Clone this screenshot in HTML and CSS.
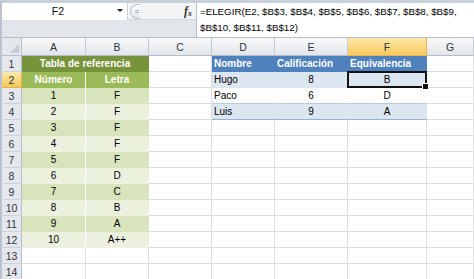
FILE: index.html
```html
<!DOCTYPE html>
<html>
<head lang="es">
    <meta charset="UTF-8">
    <title>ELEGIR</title>
    <link rel="stylesheet" href="styles.css">
</head>
<body>
<div class="excel">
    <div class="fbar">
        <div class="fbar-left">
            <div class="fbar-top">
                <div class="namebox"><span class="ref">F2</span><span class="drop"></span></div>
                <div class="splitter"><i></i><i></i></div>
                <div class="fx">f<sub>x</sub></div>
            </div>
        </div>
        <div class="formula">=ELEGIR(E2, $B$3, $B$4, $B$5, $B$6, $B$7, $B$8, $B$9,<br>$B$10, $B$11, $B$12)</div>
    </div>
    <div class="sheet">
        <!-- cabecera de columnas -->
        <div class="corner"></div>
        <div class="ch">A</div><div class="ch">B</div><div class="ch">C</div><div class="ch">D</div>
        <div class="ch">E</div><div class="ch on">F</div><div class="ch">G</div>

        <div class="rh">1</div>
        <div class="c title">Tabla de referencia</div>
        <div class="c"></div>
        <div class="c bh">Nombre</div><div class="c bh">Calificación</div><div class="c bh">Equivalencia</div>
        <div class="c"></div>

        <div class="rh on">2</div>
        <div class="c gh ga">Número</div><div class="c gh">Letra</div>
        <div class="c"></div>
        <div class="c b1 left">Hugo</div><div class="c b1">8</div><div class="c b1 sel">B</div>
        <div class="c"></div>

        <div class="rh">3</div>
        <div class="c g1 ga">1</div><div class="c g1">F</div>
        <div class="c"></div>
        <div class="c b2 left">Paco</div><div class="c b2">6</div><div class="c b2">D</div>
        <div class="c"></div>

        <div class="rh">4</div>
        <div class="c g2 ga">2</div><div class="c g2">F</div>
        <div class="c"></div>
        <div class="c b1 bl left">Luis</div><div class="c b1 bl">9</div><div class="c b1 bl">A</div>
        <div class="c"></div>

        <div class="rh">5</div>
        <div class="c g1 ga">3</div><div class="c g1">F</div>
        <div class="c"></div><div class="c"></div><div class="c"></div><div class="c"></div><div class="c"></div>

        <div class="rh">6</div>
        <div class="c g2 ga">4</div><div class="c g2">F</div>
        <div class="c"></div><div class="c"></div><div class="c"></div><div class="c"></div><div class="c"></div>

        <div class="rh">7</div>
        <div class="c g1 ga">5</div><div class="c g1">F</div>
        <div class="c"></div><div class="c"></div><div class="c"></div><div class="c"></div><div class="c"></div>

        <div class="rh">8</div>
        <div class="c g2 ga">6</div><div class="c g2">D</div>
        <div class="c"></div><div class="c"></div><div class="c"></div><div class="c"></div><div class="c"></div>

        <div class="rh">9</div>
        <div class="c g1 ga">7</div><div class="c g1">C</div>
        <div class="c"></div><div class="c"></div><div class="c"></div><div class="c"></div><div class="c"></div>

        <div class="rh">10</div>
        <div class="c g2 ga">8</div><div class="c g2">B</div>
        <div class="c"></div><div class="c"></div><div class="c"></div><div class="c"></div><div class="c"></div>

        <div class="rh">11</div>
        <div class="c g1 ga">9</div><div class="c g1">A</div>
        <div class="c"></div><div class="c"></div><div class="c"></div><div class="c"></div><div class="c"></div>

        <div class="rh">12</div>
        <div class="c g2 ga">10</div><div class="c g2">A++</div>
        <div class="c"></div><div class="c"></div><div class="c"></div><div class="c"></div><div class="c"></div>

        <div class="rh">13</div>
        <div class="c"></div><div class="c"></div><div class="c"></div><div class="c"></div>
        <div class="c"></div><div class="c"></div><div class="c"></div>

        <div class="rh">14</div>
        <div class="c"></div><div class="c"></div><div class="c"></div><div class="c"></div>
        <div class="c"></div><div class="c"></div><div class="c"></div>
    </div>
</div>
</body>
</html>
```

FILE: styles.css
```css
* {
    margin: 0;
    padding: 0;
    box-sizing: border-box;
}

body {
    font-family: "Liberation Sans", Arial, sans-serif;
    font-size: 10px;
    color: #111;
    background: #fff;
}

.excel {
    width: 474px;
    height: 279px;
    overflow: hidden;
    border-left: 2px solid #b9c3cf;
    border-top: 3px solid #c7cfd9;
}

/* barra de fórmulas */
.fbar {
    display: flex;
    height: 35px;
    border-bottom: 1px solid #b4bdc9;
}

.fbar-left {
    width: 194px;
    background: #e2e6eb;
}

.fbar-top {
    display: flex;
    align-items: center;
    height: 17px;
    background: #f2f4f6;
    border-bottom: 1px solid #d3d9e0;
}

.namebox {
    display: flex;
    align-items: center;
    width: 126px;
    height: 17px;
    background: #fff;
    border-right: 1px solid #c9d0d8;
}

.namebox .ref {
    flex: 1;
    text-align: center;
    font-size: 10.5px;
}

.namebox .drop {
    width: 13px;
    height: 4px;
    position: relative;
}

.namebox .drop::after {
    content: "";
    position: absolute;
    left: 3px;
    top: 0;
    border-left: 3px solid transparent;
    border-right: 3px solid transparent;
    border-top: 3px solid #222;
}

.splitter {
    display: flex;
    flex-direction: column;
    justify-content: center;
    gap: 1px;
    width: 10px;
    height: 15px;
    margin-left: 2px;
    padding-left: 4px;
    border: 1px solid #b8c0ca;
    border-right: none;
    border-radius: 8px 0 0 8px;
    background: linear-gradient(#fbfcfd, #e6e9ee);
}

.splitter i {
    display: block;
    width: 4px;
    height: 1px;
    background: #aab3be;
}

.fx {
    margin-left: auto;
    margin-right: 4px;
    font-family: "Liberation Serif", serif;
    font-style: italic;
    font-weight: bold;
    font-size: 12px;
    color: #333;
}

.fx sub {
    font-size: 8px;
    vertical-align: -1px;
}

.formula {
    flex: 1;
    background: #fff;
    border-left: 1px solid #b4bdc9;
    padding: 1px 0 0 3px;
    font-size: 9.75px;
    line-height: 16px;
    color: #000;
    white-space: nowrap;
}

/* hoja */
.sheet {
    display: grid;
    grid-template-columns: 20px 64px 63px 63px 63px 73px 79px 1fr;
    grid-template-rows: 18px;
    grid-auto-rows: 16px;
}

.corner {
    position: relative;
    background: #e4e8ed;
    border-right: 1px solid #b4bdc9;
    border-bottom: 1px solid #b4bdc9;
}

.corner::after {
    content: "";
    position: absolute;
    right: 2px;
    bottom: 2px;
    border-left: 9px solid transparent;
    border-bottom: 9px solid #c6ccd4;
}

.ch {
    display: flex;
    align-items: center;
    justify-content: center;
    background: linear-gradient(#f8f9fa, #e3e6ea);
    border-right: 1px solid #c3cad3;
    border-bottom: 1px solid #b4bdc9;
    color: #2e3540;
    font-size: 10.5px;
}

.rh {
    display: flex;
    align-items: center;
    justify-content: center;
    background: #e4e8ed;
    border-right: 1px solid #b4bdc9;
    border-bottom: 1px solid #cdd3db;
    color: #2e3540;
    font-size: 10.5px;
}

.ch.on,
.rh.on {
    background: linear-gradient(#fde8a9, #f7c95e);
    border-color: #e9b34a;
}

.c {
    display: flex;
    align-items: center;
    justify-content: center;
    border-right: 1px solid #dadde2;
    border-bottom: 1px solid #dadde2;
    color: #000;
    white-space: nowrap;
}

.c.left {
    justify-content: flex-start;
    padding-left: 2px;
}

/* tabla verde */
.title {
    grid-column: span 2;
    background: #77933c;
    border-color: #77933c;
    color: #fff;
    font-weight: bold;
}

.gh {
    background: #9bbb59;
    border-color: #9bbb59;
    color: #fff;
    font-weight: bold;
}

.g1 {
    background: #d8e4bc;
    border-color: #d8e4bc;
}

.g2 {
    background: #ebf1de;
    border-color: #ebf1de;
}

.ga {
    border-right-color: #fff;
}

/* tabla azul */
.bh {
    justify-content: flex-start;
    padding-left: 2px;
    background: #4f81bd;
    border-color: #4f81bd;
    color: #fff;
    font-weight: bold;
}

.b1 {
    background: #dce6f1;
    border-color: #dce6f1;
}

.b2 {
    background: #fff;
    border-right-color: #fff;
    border-bottom-color: #b8cce4;
}

.bl {
    border-bottom-color: #95b3d7;
}

.sel {
    position: relative;
}

.sel::after {
    content: "";
    position: absolute;
    left: -1px;
    top: -1px;
    right: -1px;
    bottom: -1px;
    border: 2px solid #111;
}

.sel::before {
    content: "";
    position: absolute;
    right: -3px;
    bottom: -3px;
    width: 5px;
    height: 5px;
    background: #111;
    border: 1px solid #fff;
    z-index: 1;
}
```
